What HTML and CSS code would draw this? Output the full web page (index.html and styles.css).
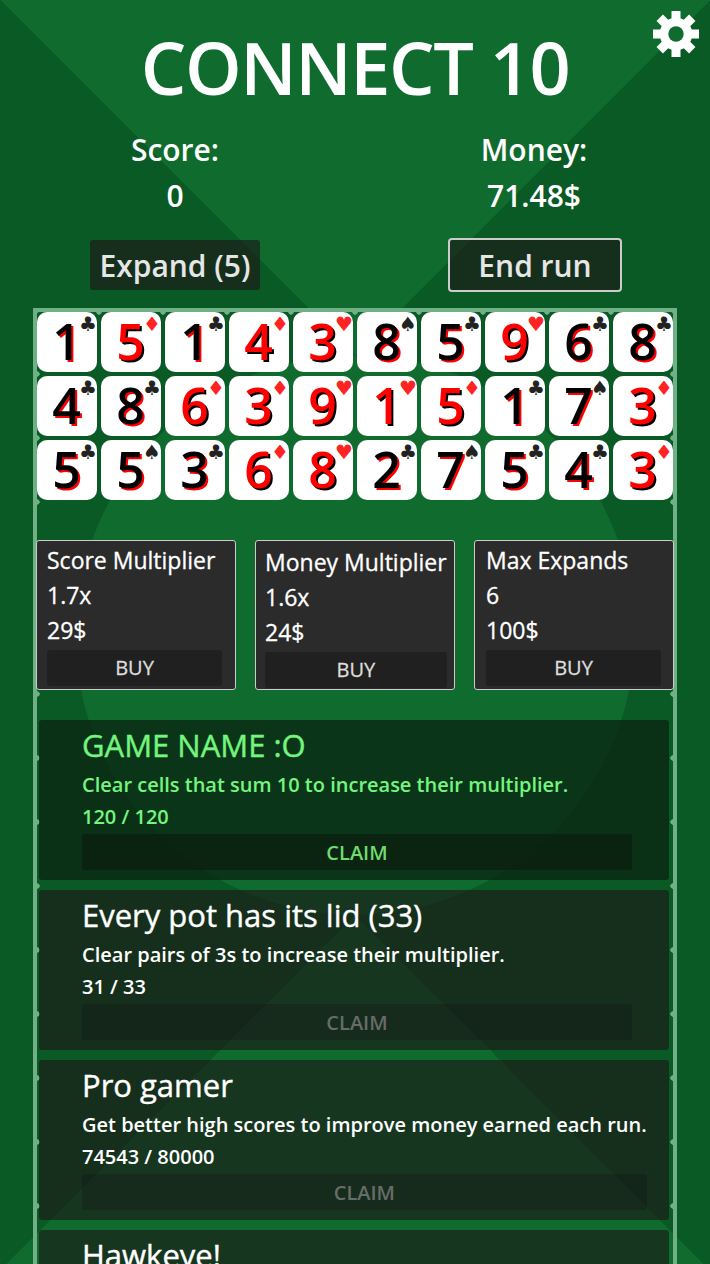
FILE: index.html
```html
<!DOCTYPE html>
<html lang="en">
<head>
    <meta charset="UTF-8">
    <meta name="viewport" content="width=device-width, initial-scale=1.0">
    <title>Connect 10</title>
    <link rel="stylesheet" href="styles.css">
</head>
<body>
    <div id="screen">
        <svg class="gear" viewBox="-23 -23 46 46" aria-label="Settings">
            <g fill="#fff">
                <rect x="-4.5" y="-23" width="9" height="46"/>
                <rect x="-4.5" y="-23" width="9" height="46" transform="rotate(45)"/>
                <rect x="-4.5" y="-23" width="9" height="46" transform="rotate(90)"/>
                <rect x="-4.5" y="-23" width="9" height="46" transform="rotate(135)"/>
            </g>
            <circle r="12" fill="none" stroke="#fff" stroke-width="8.5"/>
            <circle r="7.7" fill="#0f6c2e"/>
        </svg>

        <h1 class="title">CONNECT 10</h1>

        <div class="stats">
            <div class="stat">
                <p>Score:</p>
                <p>0</p>
            </div>
            <div class="stat">
                <p>Money:</p>
                <p>71.48$</p>
            </div>
            <div class="stat-btn">
                <a href="#" class="btn">Expand (5)</a>
            </div>
            <div class="stat-btn">
                <a href="#" class="btn btn-outline">End run</a>
            </div>
        </div>

        <div id="board">
            <div class="grid">
                <div class="cell">1<span class="suit">♣</span></div>
                <div class="cell red">5<span class="suit">♦</span></div>
                <div class="cell">1<span class="suit">♣</span></div>
                <div class="cell red">4<span class="suit">♦</span></div>
                <div class="cell red">3<span class="suit">♥</span></div>
                <div class="cell">8<span class="suit">♠</span></div>
                <div class="cell">5<span class="suit">♣</span></div>
                <div class="cell red">9<span class="suit">♥</span></div>
                <div class="cell">6<span class="suit">♣</span></div>
                <div class="cell">8<span class="suit">♣</span></div>

                <div class="cell">4<span class="suit">♣</span></div>
                <div class="cell">8<span class="suit">♣</span></div>
                <div class="cell red">6<span class="suit">♦</span></div>
                <div class="cell red">3<span class="suit">♦</span></div>
                <div class="cell red">9<span class="suit">♥</span></div>
                <div class="cell red">1<span class="suit">♥</span></div>
                <div class="cell red">5<span class="suit">♦</span></div>
                <div class="cell">1<span class="suit">♣</span></div>
                <div class="cell">7<span class="suit">♠</span></div>
                <div class="cell red">3<span class="suit">♦</span></div>

                <div class="cell">5<span class="suit">♣</span></div>
                <div class="cell">5<span class="suit">♠</span></div>
                <div class="cell">3<span class="suit">♣</span></div>
                <div class="cell red">6<span class="suit">♦</span></div>
                <div class="cell red">8<span class="suit">♥</span></div>
                <div class="cell">2<span class="suit">♣</span></div>
                <div class="cell">7<span class="suit">♠</span></div>
                <div class="cell">5<span class="suit">♣</span></div>
                <div class="cell">4<span class="suit">♣</span></div>
                <div class="cell red">3<span class="suit">♦</span></div>
            </div>

            <div class="shop">
                <div class="shop-item">
                    <div class="shop-body">
                        <p>Score Multiplier</p>
                        <p>1.7x</p>
                        <p>29$</p>
                        <a href="#" class="buy">BUY</a>
                    </div>
                </div>
                <div class="shop-item shop-wide">
                    <div class="shop-body">
                        <p>Money Multiplier</p>
                        <p>1.6x</p>
                        <p>24$</p>
                        <a href="#" class="buy">BUY</a>
                    </div>
                </div>
                <div class="shop-item shop-last">
                    <div class="shop-body">
                        <p>Max Expands</p>
                        <p>6</p>
                        <p>100$</p>
                        <a href="#" class="buy">BUY</a>
                    </div>
                </div>
            </div>

            <div class="goals">
                <div class="goal done">
                    <div class="goal-body">
                        <h2>GAME NAME :O</h2>
                        <p class="goal-desc">Clear cells that sum 10 to increase their multiplier.</p>
                        <p class="goal-count">120 / 120</p>
                        <a href="#" class="claim">CLAIM</a>
                    </div>
                </div>
                <div class="goal">
                    <div class="goal-body">
                        <h2>Every pot has its lid (33)</h2>
                        <p class="goal-desc">Clear pairs of 3s to increase their multiplier.</p>
                        <p class="goal-count">31 / 33</p>
                        <a href="#" class="claim">CLAIM</a>
                    </div>
                </div>
                <div class="goal">
                    <div class="goal-body">
                        <h2>Pro gamer</h2>
                        <p class="goal-desc">Get better high scores to improve money earned each run.</p>
                        <p class="goal-count">74543 / 80000</p>
                        <a href="#" class="claim">CLAIM</a>
                    </div>
                </div>
                <div class="goal">
                    <div class="goal-body">
                        <h2>Hawkeye!</h2>
                    </div>
                </div>
            </div>
        </div>
    </div>
</body>
</html>
```

FILE: styles.css
```css
* {
    margin: 0;
    padding: 0;
    box-sizing: border-box;
}

html, body {
    height: 100%;
    overflow: hidden;
}

a {
    color: inherit;
    text-decoration: none;
}

body {
    font-family: "Open Sans", "Noto Sans", sans-serif;
    font-weight: 600;
    color: #fff;
}

/* dark base, top + bottom triangles and the circle in the middle */
#screen {
    position: relative;
    height: 1264px;
    overflow: hidden;
    padding-top: 26px;
    background-color: #0a5a25;
    background-image:
        radial-gradient(circle 280px at 355px 635px, #0f6c2e 99.6%, transparent 100%),
        conic-gradient(from -45deg at 355px 355px, #0f6c2e 0 90deg, transparent 90deg),
        conic-gradient(from 135deg at 355px 915px, #0f6c2e 0 90deg, transparent 90deg);
}

.gear {
    position: absolute;
    top: 11px;
    left: 653px;
    width: 46px;
    height: 46px;
}

.title {
    font-size: 72px;
    font-weight: 600;
    letter-spacing: -1.4px;
    line-height: 82px;
    text-align: center;
}

.stats {
    display: grid;
    grid-template-columns: 350px 352px;
    column-gap: 8px;
    margin-top: 19px;
    font-size: 30px;
    text-align: center;
}

.stat p {
    line-height: 46px;
}

.stat-btn {
    display: flex;
    justify-content: center;
    align-items: center;
    height: 54px;
    margin-top: 19px;
}

.btn {
    display: flex;
    align-items: center;
    justify-content: center;
    width: 170px;
    height: 50px;
    border-radius: 3px;
    background: rgba(28, 18, 24, 0.6);
    color: #e6e6e6;
}

.btn-outline {
    width: 174px;
    height: 54px;
    margin-left: 2px;
    border: 2px solid #ccc;
    border-radius: 4px;
}

/* little marks in the gaps come from the cell size, 64px */
#board {
    margin: 16px 33px 0;
    height: 1000px;
    border: 4px solid #6fb085;
    border-bottom: none;
    background-image:
        radial-gradient(circle 3px at 0 50%, #6fb085 80%, transparent),
        radial-gradient(circle 3px at 100% 50%, #6fb085 80%, transparent),
        radial-gradient(circle 3px at 50% 0, #6fb085 80%, transparent);
    background-size: 4px 64px, 4px 64px, 64px 4px;
    background-position: 0 30px, 100% 30px, 30px 0;
    background-repeat: repeat-y, repeat-y, repeat-x;
}

.grid {
    display: grid;
    grid-template-columns: repeat(10, 60px);
    grid-auto-rows: 60px;
    gap: 4px;
}

.cell {
    position: relative;
    padding-right: 1px;
    border-radius: 10px;
    background: #fff;
    color: #000;
    font-size: 50px;
    font-weight: 600;
    line-height: 58px;
    text-align: center;
    text-shadow: 2px 2px 0 #f00;
}

.cell.red {
    color: #f00;
    text-shadow: 2px 2px 0 #000;
}

.suit {
    position: absolute;
    top: 2px;
    right: -1px;
    width: 20px;
    color: #222;
    font-family: "DejaVu Sans", sans-serif;
    font-size: 20px;
    font-weight: 400;
    line-height: 20px;
    text-shadow: none;
}

.red .suit {
    color: #f22;
}

.shop {
    display: flex;
    justify-content: space-between;
    margin: 40px -1px 0;
}

.shop-item {
    width: 200px;
    height: 150px;
    padding: 2px 0 0 10px;
    border: 1px solid #ccc;
    border-radius: 3px;
    background: #2b2b2b;
}

.shop-wide {
    padding: 4px 0 0 9px;
}

.shop-last {
    padding-left: 11px;
}

.shop-body {
    width: max-content;
    min-width: 175px;
    font-size: 23px;
    font-weight: 400;
    -webkit-text-stroke: 0.3px;
    line-height: 35px;
}

.buy {
    display: block;
    height: 36px;
    margin-top: 2px;
    border-radius: 3px;
    background: #202020;
    color: #ddd;
    font-size: 20px;
    font-weight: 400;
    line-height: 36px;
    text-align: center;
}

.goals {
    display: flex;
    flex-direction: column;
    gap: 10px;
    margin: 30px 4px 0 2px;
}

.goal {
    flex: none;
    height: 160px;
    padding: 5px 0 0 43px;
    border-radius: 3px;
    background: rgba(28, 18, 24, 0.6);
}

.goal-body {
    width: max-content;
    min-width: 550px;
}

.goal h2 {
    font-size: 31px;
    font-weight: 400;
    -webkit-text-stroke: 0.4px;
    line-height: 40px;
}

.goal-desc {
    margin-top: 4px;
    font-size: 20px;
    line-height: 32px;
}

.goal-count {
    font-size: 20px;
    line-height: 32px;
}

.claim {
    display: block;
    height: 36px;
    margin-top: 1px;
    border-radius: 3px;
    background: rgba(20, 20, 20, 0.3);
    color: #666d68;
    font-size: 20px;
    line-height: 38px;
    text-align: center;
}

.done {
    background: rgba(10, 30, 15, 0.7);
    color: #74f57f;
}

.done .claim {
    background: rgba(10, 20, 10, 0.5);
    color: #6fdc6f;
}
```
